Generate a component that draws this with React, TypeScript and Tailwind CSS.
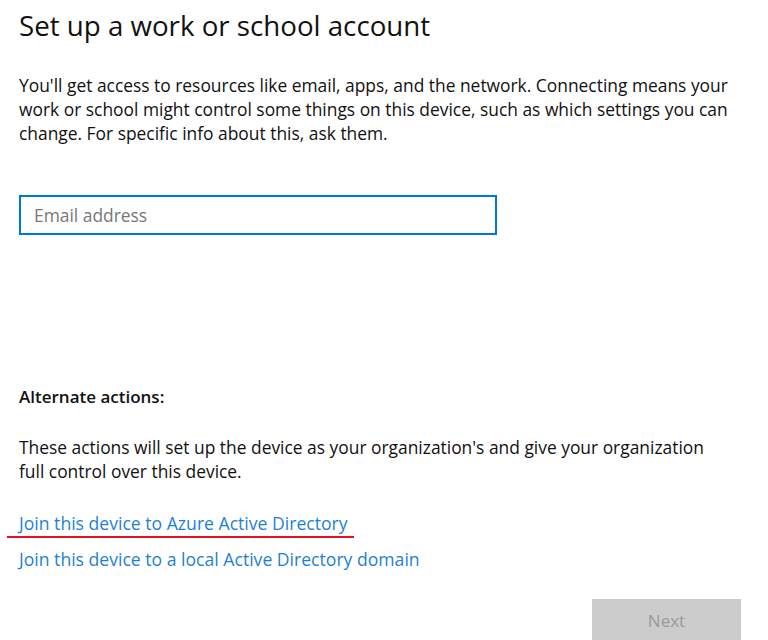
export default function App() {
  return (
    <div className="w-[768px] h-[640px] overflow-hidden bg-white text-black pl-[19px]" style={{ fontFamily: '"Open Sans", "Noto Sans", sans-serif' }}>
      <h1 className="text-[27.7px] leading-[36px] pt-[7px] font-normal text-[#111]">Set up a work or school account</h1>
      <p className="mt-[30px] text-[17.4px] leading-[24px] w-[725px] text-[#111]">
        You'll get access to resources like email, apps, and the network. Connecting means your work or school might control some things on this device, such as which settings you can change. For specific info about this, ask them.
      </p>
      <div className="mt-[50px] w-[478px] h-[40px] border-2 border-[#0078d7] flex items-center px-[13px] text-[17.4px] text-[#777]">Email address</div>
      <div className="mt-[150px] text-[17px] leading-[24px] font-semibold text-[#111]">Alternate actions:</div>
      <p className="mt-[26px] text-[17.4px] leading-[24px] w-[700px] text-[#111]">
        These actions will set up the device as your organization's and give your organization full control over this device.
      </p>
      <div className="mt-[28px] text-[17.6px] text-[#1f7fd6] leading-[24px]">Join this device to Azure Active Directory</div>
      <div className="-ml-[12px] mt-[1px] w-[347px] h-[2px] bg-[#e81123]" />
      <div className="mt-[9px] text-[17.6px] text-[#1f7fd6] leading-[24px]">Join this device to a local Active Directory domain</div>
      <div className="mt-[28px] ml-[573px] w-[149px] h-[44px] bg-[#cccccc] flex items-center justify-center text-[17px] text-[#999]">Next</div>
    </div>
  );
}
